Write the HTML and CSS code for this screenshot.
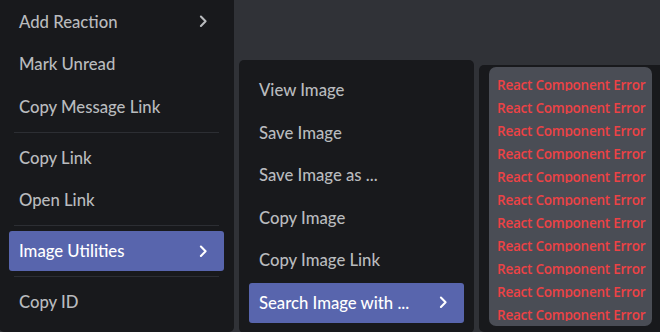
FILE: index.html
```html
<!DOCTYPE html>
<html lang="en">
<head>
<meta charset="utf-8">
<title>Context menu</title>
<link rel="stylesheet" href="styles.css">
</head>
<body>
<div class="stage">
  <div class="menu menu-main">
    <div class="item"><span>Add Reaction</span><svg class="caret" viewBox="0 0 24 24"><polyline points="9.5,7 14.5,12 9.5,17"/></svg></div>
    <div class="item"><span>Mark Unread</span></div>
    <div class="item"><span>Copy Message Link</span></div>
    <div class="sep"></div>
    <div class="item"><span>Copy Link</span></div>
    <div class="item"><span>Open Link</span></div>
    <div class="sep"></div>
    <div class="item active"><span>Image Utilities</span><svg class="caret" viewBox="0 0 24 24"><polyline points="9.5,7 14.5,12 9.5,17"/></svg></div>
    <div class="sep"></div>
    <div class="item"><span>Copy ID</span></div>
  </div>
  <div class="menu menu-sub">
    <div class="item"><span>View Image</span></div>
    <div class="item"><span>Save Image</span></div>
    <div class="item"><span>Save Image as ...</span></div>
    <div class="item"><span>Copy Image</span></div>
    <div class="item"><span>Copy Image Link</span></div>
    <div class="item active"><span>Search Image with ...</span><svg class="caret" viewBox="0 0 24 24"><polyline points="9.5,7 14.5,12 9.5,17"/></svg></div>
  </div>
  <div class="menu menu-err">
    <div class="errbox">
      <div class="err">React Component Error</div>
      <div class="err">React Component Error</div>
      <div class="err">React Component Error</div>
      <div class="err">React Component Error</div>
      <div class="err">React Component Error</div>
      <div class="err">React Component Error</div>
      <div class="err">React Component Error</div>
      <div class="err">React Component Error</div>
      <div class="err">React Component Error</div>
      <div class="err">React Component Error</div>
      <div class="err">React Component Error</div>
    </div>
  </div>
</div>
</body>
</html>
```
FILE: styles.css
```css
html, body {
  margin: 0;
  padding: 0;
}
body {
  width: 660px;
  height: 332px;
  overflow: hidden;
  background: #303237;
  font-family: Lato, "Liberation Sans", sans-serif;
}
.stage {
  display: flex;
  align-items: flex-start;
  gap: 5px;
  height: 332px;
}
.menu {
  flex: none;
  box-sizing: border-box;
  width: 235px;
  background: #18191c;
  border-radius: 5px;
  padding: 7.5px 10px;
}
.menu-main {
  margin-left: -1px;
  margin-top: -8.5px;
}
.menu-sub {
  margin-top: 60px;
}
.menu-err {
  margin-top: 65px;
  padding: 2px 8px 6px 10px;
  width: 200px;
}
.item {
  box-sizing: border-box;
  height: 40px;
  margin: 2.5px 0;
  padding: 0 10px;
  display: flex;
  align-items: center;
  justify-content: space-between;
  border-radius: 3px;
  color: #b9bbbe;
  font-size: 16.7px;
  font-weight: 500;
}
.item.active {
  background: #5865ad;
  color: #ffffff;
}
.caret {
  width: 22.5px;
  height: 22.5px;
  flex: none;
}
.caret polyline {
  fill: none;
  stroke: currentColor;
  stroke-width: 2.2;
  stroke-linecap: round;
  stroke-linejoin: round;
}
.sep {
  margin: 5px;
  border-bottom: 1px solid #2c2e33;
}
.errbox {
  width: 163px;
  box-sizing: border-box;
  height: 259px;
  background: #4a4d55;
  border-radius: 7px;
  padding: 9.5px 0 0 8px;
  overflow: hidden;
}
.err {
  height: 14px;
  line-height: 16px;
  margin-bottom: 9px;
  overflow: hidden;
  white-space: nowrap;
  color: #ed4245;
  font-family: "Open Sans", "Noto Sans", sans-serif;
  font-weight: 600;
  font-size: 13.5px;
  letter-spacing: -0.23px;
}
```
